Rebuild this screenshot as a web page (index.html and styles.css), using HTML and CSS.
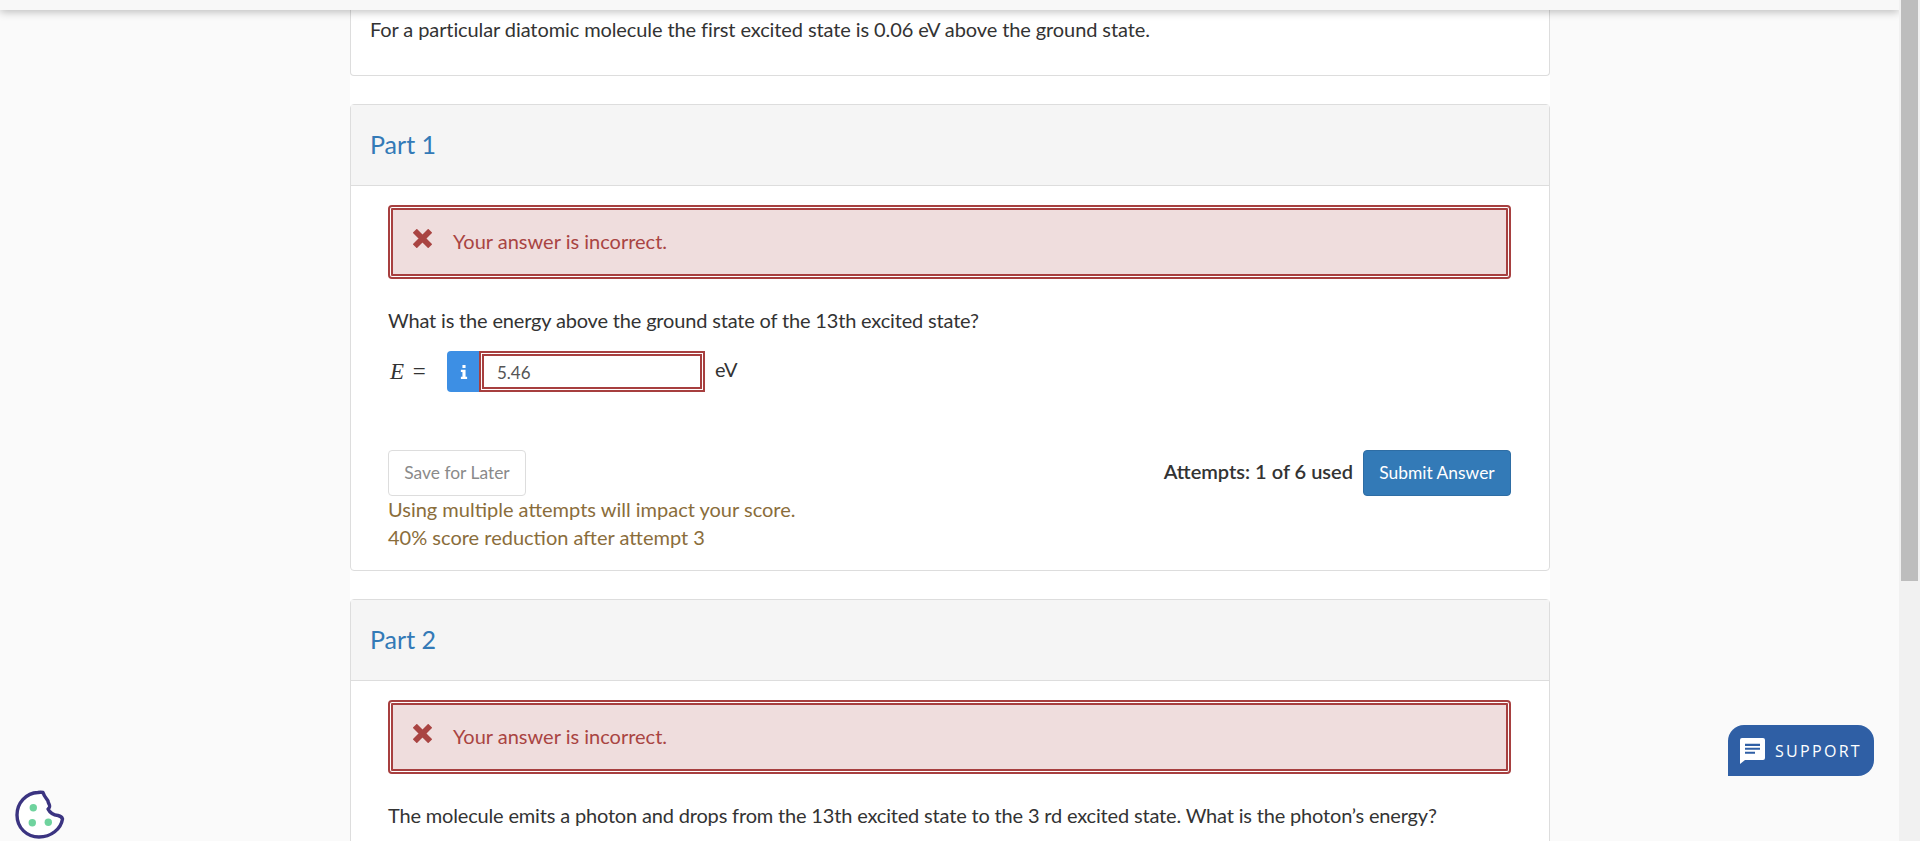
FILE: index.html
```html
<!DOCTYPE html>
<html lang="en">
<head>
    <meta charset="UTF-8">
    <title>Assignment</title>
    <link rel="stylesheet" href="styles.css">
</head>

<body>
    <!--top bar-->
    <div class="topbar"></div>

    <main class="column">
        <section class="card intro">
            <p>For a particular diatomic molecule the first excited state is 0.06 eV above the ground state.</p>
        </section>

        <!--part 1-->
        <section class="card">
            <h2 class="card-head">Part 1</h2>
            <div class="card-body">
                <div class="alert">
                    <svg class="cross" viewBox="0 0 20 20"><path d="M4 4 16 16M16 4 4 16"/></svg>
                    <span class="alert-text">Your answer is incorrect.</span>
                </div>
                <p class="question">What is the energy above the ground state of the 13th excited state?</p>
                <div class="answer">
                    <span class="math"><i>E</i> =</span>
                    <span class="info">
                        <svg viewBox="0 0 10 18"><path d="M3 0h4v4H3zM1 6h6v9h2v3H1v-3h2V9H1z"/></svg>
                    </span>
                    <input class="field" type="text" value="5.46">
                    <span class="unit">eV</span>
                </div>
                <div class="actions">
                    <button class="btn btn-save">Save for Later</button>
                    <div class="submit-box">
                        <span class="attempts">Attempts: 1 of 6 used</span>
                        <button class="btn btn-submit">Submit Answer</button>
                    </div>
                </div>
                <p class="warn">Using multiple attempts will impact your score.<br>40% score reduction after attempt 3</p>
            </div>
        </section>

        <!--part 2-->
        <section class="card">
            <h2 class="card-head">Part 2</h2>
            <div class="card-body">
                <div class="alert">
                    <svg class="cross" viewBox="0 0 20 20"><path d="M4 4 16 16M16 4 4 16"/></svg>
                    <span class="alert-text">Your answer is incorrect.</span>
                </div>
                <p class="question">The molecule emits a photon and drops from the 13th excited state to the 3 rd excited state. What is the photon’s energy?</p>
            </div>
        </section>
    </main>

    <!--cookie button-->
    <svg class="cookie" viewBox="0 0 50 50">
        <path class="cookie-line" d="M28 2.5C26 2 25 2 23 2.5 11 3 2 13 2 25 2 38 12 47 24 47 36 47 46 39 47.5 29 47 27 45 26 43 25.5 38 25 35 23 33 19 37 16 33 14 33 11 31 8 29 6 28 2.5Z"/>
        <circle class="cookie-dot" cx="18.3" cy="17.7" r="3.7"/>
        <circle class="cookie-dot" cx="17.3" cy="32.7" r="3.7"/>
        <circle class="cookie-dot" cx="33.3" cy="32.3" r="3.7"/>
    </svg>

    <!--support button-->
    <a class="support" href="#">
        <svg viewBox="0 0 26 26"><path d="M2 0h21a2 2 0 0 1 2 2v18a2 2 0 0 1-2 2H5l-5 4V2a2 2 0 0 1 2-2Z" fill="#fff"/><path d="M5 5.7h15V8H5zM5 9.7h15v2H5zM5 13.7h10v2H5z" fill="#2f5fa5"/></svg>
        SUPPORT
    </a>

    <!--scrollbar-->
    <div class="scroll-track"><div class="scroll-thumb"></div></div>
</body></html>
```

FILE: styles.css
```css
html,
body {
    margin: 0;
    padding: 0;
    height: 100%;
    overflow: hidden;
}

body {
    background: #fafafa;
    color: #333;
    font-family: "Lato", "Liberation Sans", sans-serif;
    font-size: 20px;
    line-height: 28px;
}

p {
    margin: 0;
}

/*top bar*/
.topbar {
    position: fixed;
    top: 0;
    left: 0;
    right: 21px;
    height: 10px;
    background: #f8f8f8;
    box-shadow: 0 2px 8px rgba(0, 0, 0, .25);
    z-index: 5;
}

.column {
    width: 1200px;
    margin-left: 350px;
    background: #fff;
    height: 841px;
    overflow: hidden;
}

.card {
    border: 1px solid #ddd;
    border-radius: 4px;
    margin-bottom: 28px;
    background: #fff;
}

.intro {
    border-top: 0;
    border-radius: 0 0 4px 4px;
    height: 76px;
    box-sizing: border-box;
    padding: 15px 19px 0;
    letter-spacing: -.1px;
}

.card-head {
    margin: 0;
    height: 81px;
    box-sizing: border-box;
    padding: 24px 19px 0;
    background: #f5f5f5;
    border-bottom: 1px solid #ddd;
    color: #337ab7;
    font-size: 25px;
    font-weight: 400;
    line-height: 30px;
}

.card-body {
    padding: 19px 38px 19px 37px;
}

/*double red border box*/
.alert {
    display: flex;
    align-items: center;
    height: 74px;
    box-sizing: border-box;
    padding: 0 0 0 20px;
    background: #efdddd;
    border: 5px double #a73f3f;
    border-radius: 4px;
    color: #a94442;
    background-clip: padding-box;
}

.alert-text {
    margin-top: -2px;
}

.cross {
    width: 19px;
    height: 19px;
    margin: -7px 21px 0 0;
    fill: none;
    stroke: #a94442;
    stroke-width: 6;
    stroke-linecap: square;
}

.question {
    margin-top: 27px;
    letter-spacing: -.17px;
}

.answer {
    display: flex;
    align-items: center;
    margin-top: 17px;
    height: 41px;
}

.math {
    width: 59px;
    margin: 0 0 0 2px;
    font-family: "Liberation Serif", serif;
    font-size: 23px;
    word-spacing: 3px;
    flex: none;
    box-sizing: border-box;
}

.info {
    display: flex;
    align-items: center;
    justify-content: center;
    width: 32px;
    height: 41px;
    margin-left: -2px;
    background: #3d8fe4;
    border-radius: 4px 0 0 4px;
}

.info svg {
    width: 8px;
    height: 14px;
    fill: #fff;
    margin-left: 1px;
}

.field {
    width: 226px;
    height: 41px;
    box-sizing: border-box;
    padding: 2px 0 0 13px;
    border: 5px double #a73f3f;
    outline: 0;
    background: #fff;
    color: #555;
    font-family: "Lato", "Liberation Sans", sans-serif;
    font-size: 17px;
}

.unit {
    margin: -5px 0 0 10px;
}

.actions {
    display: flex;
    justify-content: space-between;
    align-items: flex-start;
    margin-top: 58px;
}

.btn {
    height: 46px;
    box-sizing: border-box;
    padding: 0 0 2px;
    border-radius: 4px;
    font-family: "Lato", "Liberation Sans", sans-serif;
    font-size: 17.4px;
}

.btn-save {
    width: 138px;
    border: 1px solid #ddd;
    background: #fff;
    color: #8a8a8a;
}

.submit-box {
    display: flex;
    align-items: center;
}

.attempts {
    margin: -5px 10px 0 0;
    font-weight: 600;
}

.btn-submit {
    width: 148px;
    border: 1px solid #2e6da4;
    background: #337ab7;
    color: #fff;
}

.warn {
    margin-top: -1px;
    color: #8a6d3b;
}

/*floating things*/
.cookie {
    position: fixed;
    left: 15px;
    bottom: 1px;
    width: 50px;
    height: 50px;
}

.cookie-line {
    fill: #fff;
    stroke: #3b3481;
    stroke-width: 3.4;
    stroke-linejoin: round;
}

.cookie-dot {
    fill: #6fd39e;
}

.support {
    position: fixed;
    left: 1728px;
    top: 725px;
    display: flex;
    align-items: center;
    gap: 9px;
    width: 146px;
    height: 51px;
    box-sizing: border-box;
    padding-left: 12px;
    background: #2f5fa5;
    border-radius: 16px 16px 16px 0;
    color: #fff;
    font-family: "Open Sans", sans-serif;
    font-size: 16px;
    letter-spacing: 2.3px;
    text-decoration: none;
}

.support svg {
    width: 26px;
    height: 26px;
}

.scroll-track {
    position: fixed;
    top: 0;
    right: 0;
    width: 21px;
    height: 100%;
    background: #f1f1f1;
    z-index: 6;
}

.scroll-thumb {
    width: 17px;
    height: 581px;
    margin-left: 2px;
    background: #bdbdbd;
}
```
